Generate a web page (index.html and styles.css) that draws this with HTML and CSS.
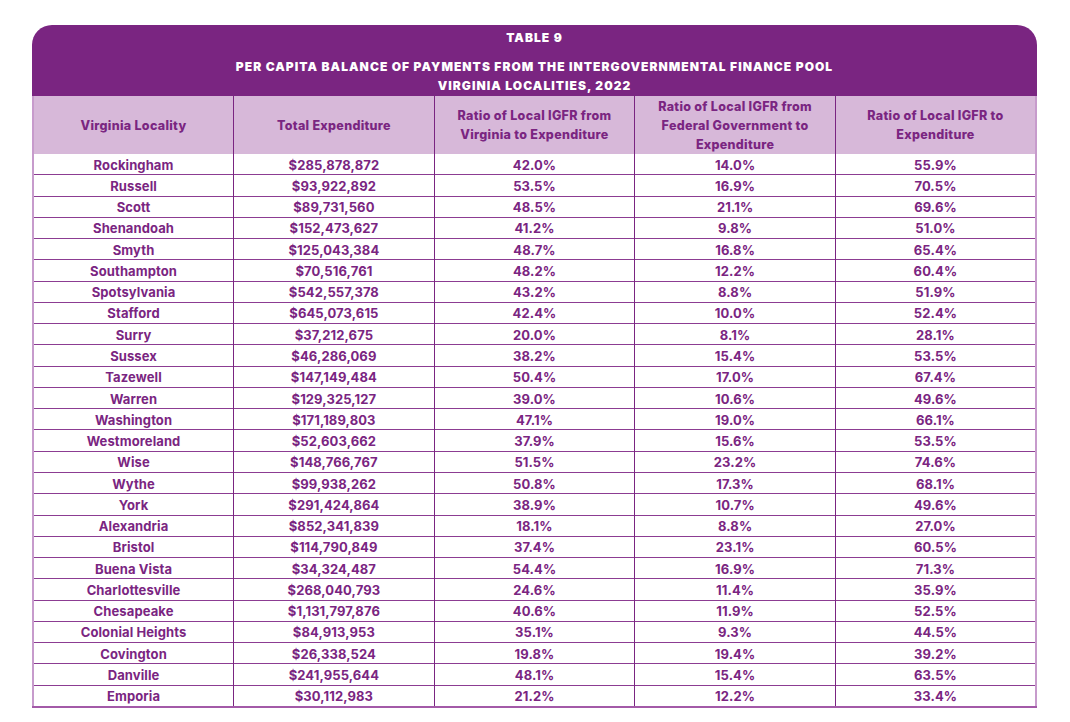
FILE: index.html
```html
<!DOCTYPE html>
<html lang="en">
<head>
    <meta charset="UTF-8">
    <meta name="viewport" content="width=device-width, initial-scale=1.0">
    <title>Table 9 - Per Capita Balance of Payments</title>
    <link rel="stylesheet" href="styles.css">
</head>
<body>

    <div class="table-card">
        <div class="table-head">
            <div class="table-number">TABLE 9</div>
            <div class="table-title">PER CAPITA BALANCE OF PAYMENTS FROM THE INTERGOVERNMENTAL FINANCE POOL<br>VIRGINIA LOCALITIES, 2022</div>
        </div>
        <table class="data-table">
            <thead>
                <tr>
                    <th>Virginia Locality</th>
                    <th>Total Expenditure</th>
                    <th>Ratio of Local IGFR from<br>Virginia to Expenditure</th>
                    <th>Ratio of Local IGFR from<br>Federal Government to<br>Expenditure</th>
                    <th>Ratio of Local IGFR to<br>Expenditure</th>
                </tr>
            </thead>
            <tbody>
                <tr><td>Rockingham</td><td>$285,878,872</td><td>42.0%</td><td>14.0%</td><td>55.9%</td></tr>
                <tr><td>Russell</td><td>$93,922,892</td><td>53.5%</td><td>16.9%</td><td>70.5%</td></tr>
                <tr><td>Scott</td><td>$89,731,560</td><td>48.5%</td><td>21.1%</td><td>69.6%</td></tr>
                <tr><td>Shenandoah</td><td>$152,473,627</td><td>41.2%</td><td>9.8%</td><td>51.0%</td></tr>
                <tr><td>Smyth</td><td>$125,043,384</td><td>48.7%</td><td>16.8%</td><td>65.4%</td></tr>
                <tr><td>Southampton</td><td>$70,516,761</td><td>48.2%</td><td>12.2%</td><td>60.4%</td></tr>
                <tr><td>Spotsylvania</td><td>$542,557,378</td><td>43.2%</td><td>8.8%</td><td>51.9%</td></tr>
                <tr><td>Stafford</td><td>$645,073,615</td><td>42.4%</td><td>10.0%</td><td>52.4%</td></tr>
                <tr><td>Surry</td><td>$37,212,675</td><td>20.0%</td><td>8.1%</td><td>28.1%</td></tr>
                <tr><td>Sussex</td><td>$46,286,069</td><td>38.2%</td><td>15.4%</td><td>53.5%</td></tr>
                <tr><td>Tazewell</td><td>$147,149,484</td><td>50.4%</td><td>17.0%</td><td>67.4%</td></tr>
                <tr><td>Warren</td><td>$129,325,127</td><td>39.0%</td><td>10.6%</td><td>49.6%</td></tr>
                <tr><td>Washington</td><td>$171,189,803</td><td>47.1%</td><td>19.0%</td><td>66.1%</td></tr>
                <tr><td>Westmoreland</td><td>$52,603,662</td><td>37.9%</td><td>15.6%</td><td>53.5%</td></tr>
                <tr><td>Wise</td><td>$148,766,767</td><td>51.5%</td><td>23.2%</td><td>74.6%</td></tr>
                <tr><td>Wythe</td><td>$99,938,262</td><td>50.8%</td><td>17.3%</td><td>68.1%</td></tr>
                <tr><td>York</td><td>$291,424,864</td><td>38.9%</td><td>10.7%</td><td>49.6%</td></tr>
                <tr><td>Alexandria</td><td>$852,341,839</td><td>18.1%</td><td>8.8%</td><td>27.0%</td></tr>
                <tr><td>Bristol</td><td>$114,790,849</td><td>37.4%</td><td>23.1%</td><td>60.5%</td></tr>
                <tr><td>Buena Vista</td><td>$34,324,487</td><td>54.4%</td><td>16.9%</td><td>71.3%</td></tr>
                <tr><td>Charlottesville</td><td>$268,040,793</td><td>24.6%</td><td>11.4%</td><td>35.9%</td></tr>
                <tr><td>Chesapeake</td><td>$1,131,797,876</td><td>40.6%</td><td>11.9%</td><td>52.5%</td></tr>
                <tr><td>Colonial Heights</td><td>$84,913,953</td><td>35.1%</td><td>9.3%</td><td>44.5%</td></tr>
                <tr><td>Covington</td><td>$26,338,524</td><td>19.8%</td><td>19.4%</td><td>39.2%</td></tr>
                <tr><td>Danville</td><td>$241,955,644</td><td>48.1%</td><td>15.4%</td><td>63.5%</td></tr>
                <tr><td>Emporia</td><td>$30,112,983</td><td>21.2%</td><td>12.2%</td><td>33.4%</td></tr>
            </tbody>
        </table>
    </div>

</body>
</html>
```

FILE: styles.css
```css
body {
    margin: 0;
    background: #fff;
    font-family: Inter, "Liberation Sans", sans-serif;
    color: #7a2581;
}

.table-card {
    width: 1005px;
    margin: 25px 0 0 32px;
}

.table-head {
    height: 71px;
    box-sizing: border-box;
    padding-top: 4px;
    background: #7a2581;
    border-radius: 20px 20px 0 0;
    color: #fff;
    text-align: center;
    font-weight: 900;
    font-size: 12px;
    letter-spacing: 1.05px;
}

.table-number {
    line-height: 18px;
}

.table-title {
    margin-top: 10px;
    line-height: 19px;
}

.data-table {
    width: 100%;
    border-collapse: collapse;
    table-layout: fixed;
    border-left: 2px solid #c79bcc;
    border-right: 2px solid #c79bcc;
    border-bottom: 2px solid #a35aa8;
}

.data-table th {
    height: 58px;
    padding: 0 4px;
    background: #d7b8d9;
    font-size: 12.5px;
    font-weight: 800;
    line-height: 19px;
    letter-spacing: 0.3px;
    border-left: 1px solid #7a2581;
}

.data-table th:first-child,
.data-table td:first-child {
    border-left: none;
}

.data-table td {
    height: 19.27px;
    padding: 1px 0 0;
    text-align: center;
    font-size: 13px;
    font-weight: 700;
    line-height: 16px;
    letter-spacing: 0.1px;
    border-left: 1px solid #7a2581;
    border-top: 1px solid #8c3c92;
}

.data-table tbody tr:first-child td {
    border-top: none;
}
```
